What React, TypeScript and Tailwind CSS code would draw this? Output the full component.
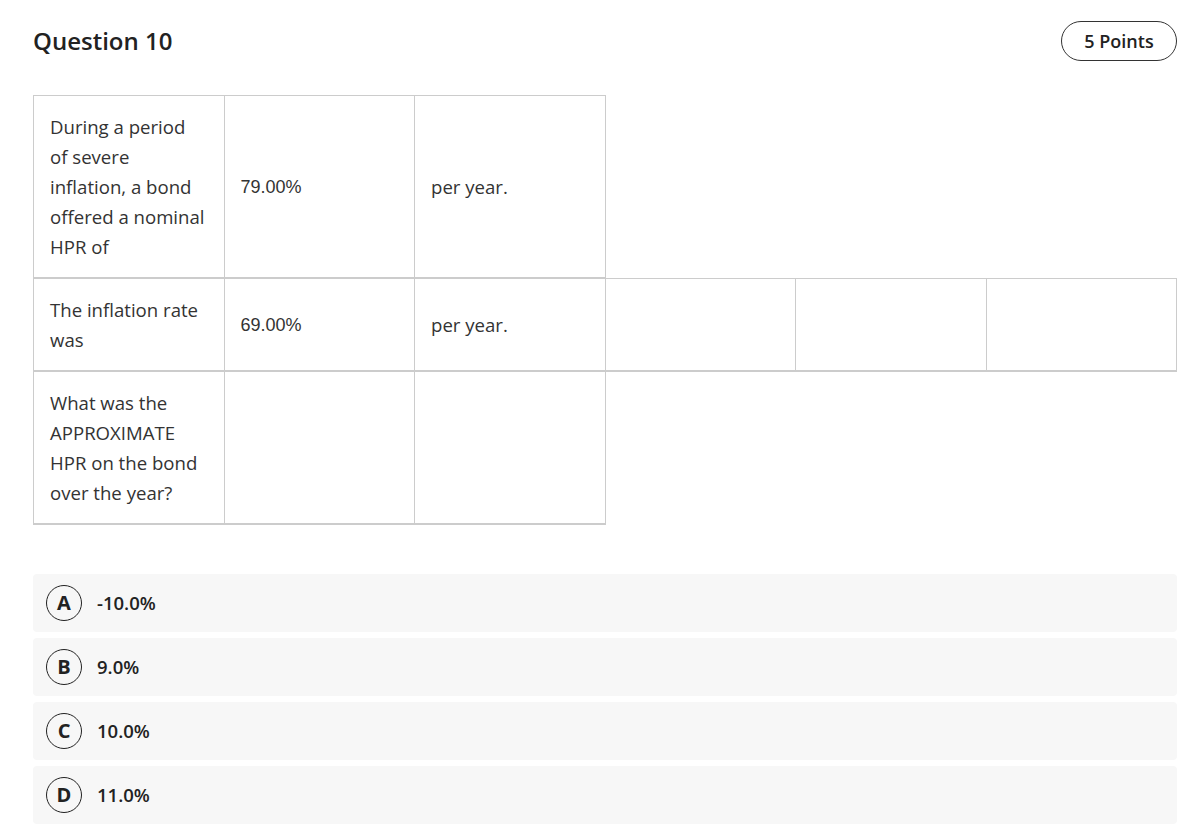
const rows: string[][][] = [
  [["During a period", "of severe", "inflation, a bond", "offered a nominal", "HPR of"], ["79.00%"], ["per year."]],
  [["The inflation rate", "was"], ["69.00%"], ["per year."], [], [], []],
  [["What was the", "APPROXIMATE", "HPR on the bond", "over the year?"], [], []],
]

const choices = [
  { key: "A", label: "-10.0%" },
  { key: "B", label: "9.0%" },
  { key: "C", label: "10.0%" },
  { key: "D", label: "11.0%" },
]

export default function App() {
  return (
    <div className="min-h-screen bg-white pl-[33px] pr-[23px] pt-[21px] font-['Open_Sans',sans-serif] text-[#222]">
      {/* Header */}
      <div className="flex items-center justify-between">
        <h1 className="text-[24px] font-semibold leading-[40px] text-[#222]">Question 10</h1>
        <div className="flex h-[40px] w-[116px] items-center justify-center rounded-full border border-[#333] text-[18px] font-semibold text-[#222]">
          5 Points
        </div>
      </div>

      {/* Data table */}
      <table className="mt-[34px] w-full table-fixed border-collapse text-[18.6px] leading-[30px] text-[#333]">
        <colgroup>
          <col className="w-1/6" />
          <col className="w-1/6" />
          <col className="w-1/6" />
          <col className="w-1/6" />
          <col className="w-1/6" />
          <col className="w-1/6" />
        </colgroup>
        <tbody>
          {rows.map((row, i) => (
            <tr key={i}>
              {row.map((lines, j) => (
                <td
                  key={j}
                  className={
                    "border border-b-2 border-[#cccccc] pt-[16px] pb-[15px] pl-[16px] pr-[8px] align-middle " +
                    (j === 1 ? "font-['Liberation_Sans',Arial,sans-serif] text-[18px]" : "")
                  }
                >
                  {lines.map((line, k) => (
                    <div key={k} className="whitespace-nowrap">{line}</div>
                  ))}
                </td>
              ))}
            </tr>
          ))}
        </tbody>
      </table>

      {/* Answer choices */}
      <div className="mt-[49px] flex flex-col gap-[6px]">
        {choices.map((c) => (
          <div key={c.key} className="flex h-[58px] items-center gap-[15px] rounded-[4px] bg-[#f7f7f7] px-[13px]">
            <div className="flex h-[36px] w-[36px] items-center justify-center rounded-full border-[1.5px] border-[#222] text-[20px] font-bold text-[#222]">
              {c.key}
            </div>
            <span className="text-[18.5px] font-semibold text-[#222]">{c.label}</span>
          </div>
        ))}
      </div>
    </div>
  )
}
